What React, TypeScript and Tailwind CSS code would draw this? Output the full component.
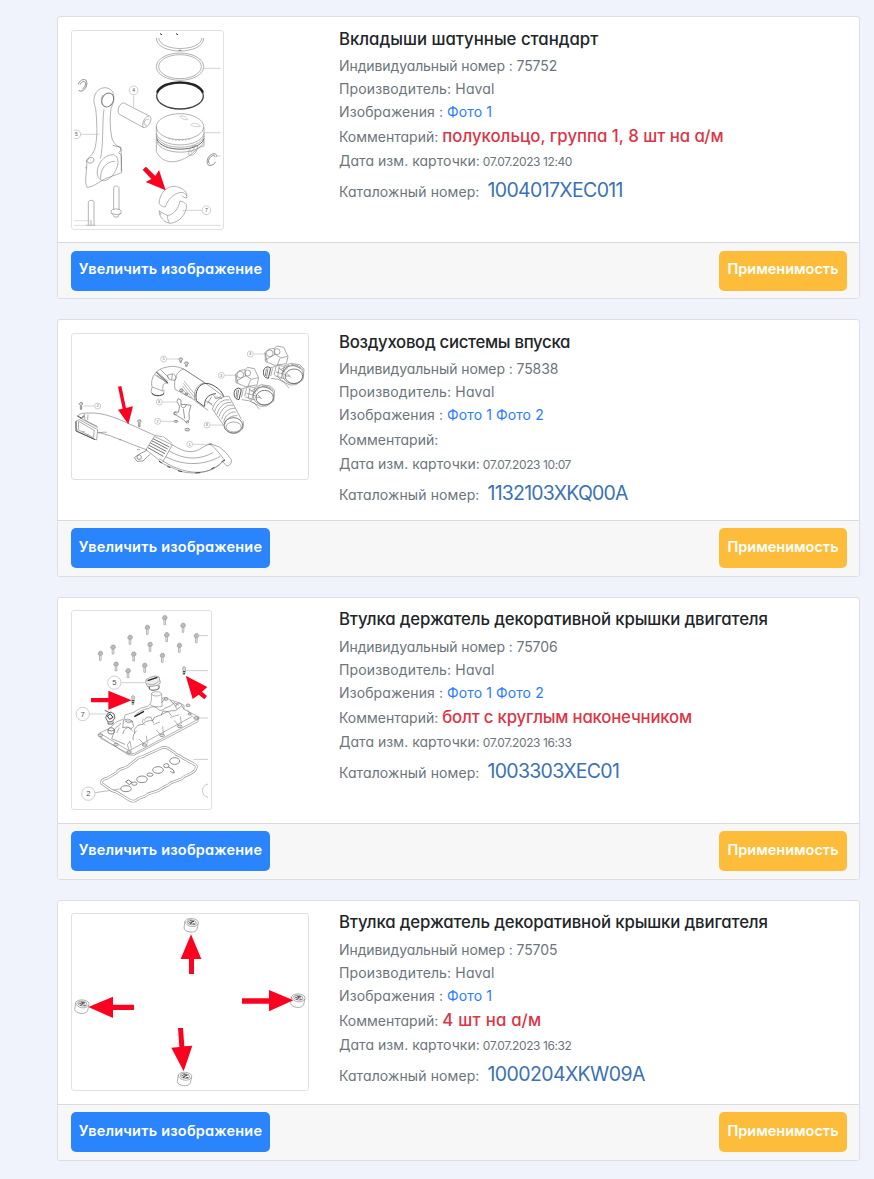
import type { ReactNode } from 'react';

const RED = '#fb0320';

function Callout({ x, y, n, r = 13 }: { x: number; y: number; n: string; r?: number }) {
  return (
    <g>
      <circle cx={x} cy={y} r={r} fill="#fff" stroke="#b5b5b5" strokeWidth={2} />
      <text x={x} y={y + r * 0.42} textAnchor="middle" fontSize={r * 1.15} fill="#555" stroke="none" fontFamily="Liberation Sans, sans-serif">
        {n}
      </text>
    </g>
  );
}

function PistonDrawing() {
  return (
    <svg viewBox="36 33 453 594" className="block h-[198px] w-[151px]" fill="none" stroke="#8d8d8d" strokeWidth={2}>
      <path d="M289 54c0 52 142 52 142 0M296 54c4 42 126 42 130 0" />
      <path d="M300 41l6 3M348 41l6 3" stroke="#333" strokeWidth={3} />
      <path d="M356 91h8" strokeWidth={4} />
      <ellipse cx={360} cy={140} rx={71} ry={41} />
      <ellipse cx={360} cy={140} rx={64} ry={36} />
      <path d="M416 120l8-3M432 145h50M432 338h50M472 408h10" stroke="#bbb" />
      <ellipse cx={360} cy={228} rx={70} ry={39} stroke="#444" strokeWidth={4} />
      <path d="M291 218c14-42 124-42 138 0" stroke="#222" strokeWidth={6} />
      <path d="M55 193c3-12 15-17 22-13 8 7 2 28-11 33-5 1-9 0-10-3M60 194c3-8 11-12 15-8 4 6-1 18-8 21" stroke="#777" strokeWidth={2.5} />
      <path d="M470 410c2-10-10-11-18-5-12 8-14 28-5 31 8 2 17-4 20-11M465 411c0-6-7-6-12-1-8 6-10 19-4 20" stroke="#777" strokeWidth={2.5} />
      <Callout x={221} y={211} n="4" />
      <path d="M221 225v36" stroke="#bbb" />
      <path d="M192 249c-12-3-24 24-14 34l71 39M192 249l74 38M249 322c13 5 30-22 22-32-10-9-27 15-22 32M266 298c-14-2-19 18-6 18" />
      <path d="M107 266c-14-34 2-62 27-63 31 2 34 31 19 62-4 31-3 59 2 86 4 17 12 26 28 32l2 75-49 18c-21 11-37 26-55 26-10-17 2-54-1-82 14-15 24-24 26-40 7-31 5-76 1-114z" />
      <ellipse cx={143} cy={240} rx={17} ry={22} stroke="#777" strokeWidth={3} transform="rotate(25 143 240)" />
      <path d="M129 225c-10 12-4 33 8 34M132 268c-6 41-1 110-11 148" />
      <path d="M112 464c-4-29 20-61 48-60 24 7 13 46-4 64-14 16-37 23-44-4M122 478c-3-28 16-54 42-54" />
      <path d="M158 376l23 6 2 9-7 7 8 8v48M80 424c5-13 22-16 22-4-3 12-17 11-22 4M79 440l-2 5" stroke="#777" />
      <Callout x={49} y={343} n="5" />
      <path d="M36 320v46" stroke="#fff" strokeWidth={12} />
      <path d="M63 343h55" stroke="#bbb" />
      <path d="M161 570v-66c0-8 16-8 16 0v66M154 572c5-7 25-7 29 0v8l-8 6-1 5h-11l-2-5-8-7zM156 580c8 5 17 5 26 0" />
      <path d="M85 616v-69c0-8 17-8 17 0v69M93 602v14M78 616h28" />
      <path d="M42 602h52M42 616h440" stroke="#ccc" />
      <ellipse cx={360} cy={320} rx={71} ry={39} />
      <path d="M289 320v74c17 38 57 38 91 18 20-10 29-30 52-34v-56M289 341c14 45 130 45 143 0M289 348c14 45 130 45 143 0" />
      <path d="M290 356c13 42 128 42 142 0" stroke="#666" strokeWidth={3} />
      <path d="M291 365c13 42 128 42 140 0" stroke="#888" />
      <path d="M326 356c20 7 46 7 68 0" strokeDasharray="4 6" />
      <path d="M359 288c4 8 13 12 24 11-2-7-10-12-24-11M392 314c7-6 21-6 30 5-13 2-24 1-30-5" stroke="#bbb" />
      <path d="M387 397c-3-11 11-22 26-20-1 15-9 29-20 29-9-1-10-4-6-9M392 394c0 4 5 4 12-14" />
      <path d="M297 549c3-31 22-50 46-50 18 2 31 11 37 21v14c-5 0-11-3-15-8M297 549c4 8 11 12 19 12 7-22 24-42 49-44 7 1 12 5 15 10" />
      <path d="M297 572c2 20 15 36 34 38 29-3 49-29 49-56-6-6-12-10-20-11-4 22-19 42-37 43-9-3-18-8-26-14zM323 586c-1 9 1 17 6 23M304 577l-5 8" />
      <Callout x={439} y={571} n="7" />
      <path d="M366 571h59" stroke="#bbb" />
      <path d="M258 440l28 28 11-18 20 61-60-25 17-9-26-28z" fill={RED} stroke="none" />
    </svg>
  );
}

function ThrottleBody() {
  return (
    <g>
      <path d="M527 147l10-10 18-3 7-7 21 4 13 27-5 22-35 5-28-12zM527 147l7 28M555 134l2 20M594 158l-19 5-18-11-29 17M564 184l8-20" />
      <circle cx={541} cy={149} r={10} />
      <circle cx={563} cy={144} r={9} />
      <path d="M528 192c-8 6-7 23 0 29l9 3 7-30-8-5z" stroke="#555" strokeWidth={3} />
      <path d="M531 195l-3 22M536 194l-4 25" stroke="#555" />
      <path d="M542 193l27-8 14 3 21-9 27 4 13 13-3 32-21 15-18 1-36-17-21-3M550 194l-6 23M560 190l-6 24M570 188l-5 31 11 11M573 198l26-13M577 207l18-14M566 192l22 14M560 205l28 8M556 216l30 9M585 188l-10 38M606 182l28 12" />
      <ellipse cx={611} cy={213} rx={31} ry={27} />
      <ellipse cx={614} cy={218} rx={26} ry={22} stroke="#666" strokeWidth={2.5} />
      <path d="M583 205c5-23 44-30 58-6M579 230l20 23M593 209l12 13M586 217h16" />
    </g>
  );
}

function IntakeDrawing() {
  return (
    <svg viewBox="36 27 708 435" className="block h-[145px] w-[236px]" fill="none" stroke="#808080" strokeWidth={2}>
      <ThrottleBody />
      <g transform="translate(88 -64)"><ThrottleBody /></g>
      <path d="M276 186c-6-28 11-55 46-60 19-5 33 0 49 6M321 174c-11 0-15 8-12 23M276 186l33 12M284 149l41 27M290 140l34 29M290 150l34 25M301 133l27 27M276 187l-3 13 4 8c10 6 27 6 34-1l1-11" />
      <path d="M276 205c9 9 26 9 36 1" stroke="#444" strokeWidth={3} />
      <path d="M289 142l35 32" stroke="#555" strokeWidth={3} />
      <path d="M323 150l17-4 10 11-5 9-17-2-5-7zM337 147l-2 18M371 132c-20 6-31 28-26 61l60 32c-6-25 4-46 29-52zM371 132l63 41 54 39" />
      <path d="M372 168l36 44M370 175l33 42M367 182l30 38M364 189l26 30M360 192l15 18" stroke="#999" />
      <ellipse cx={364} cy={196} rx={5} ry={4} stroke="#555" /><ellipse cx={379} cy={207} rx={4} ry={3} stroke="#555" />
      <path d="M409 227c-5-28 7-50 29-52 24 0 55 29 52 41M409 227l24 18" stroke="#555" strokeWidth={3} />
      <path d="M434 244c-2-22 10-36 34-38" stroke="#555" strokeWidth={3} />
      <path d="M403 226l42 31M466 215l20 6M438 228l18 9M455 215l-13 21M460 210l8 12 16-8M444 230l14 12" />
      <path d="M457 252c8-25 27-40 50-38M464 260c7-25 25-39 44-35M471 268c7-25 25-39 43-35M477 275c7-25 25-38 42-34M485 283c6-24 22-34 40-33M491 292c3-20 18-32 36-31M494 299c4-18 20-28 38-27M457 252l36 52M507 214l37 69" />
      <ellipse cx={520} cy={301} rx={28} ry={23} stroke="#666" strokeWidth={2.5} />
      <ellipse cx={521} cy={306} rx={23} ry={15} />
      <path d="M494 307c8 23 43 26 54 1M549 287l2 15-4 10" />
      <g fill="#ddd">
        <path d="M356 103l3-4h7l2 5-4 3v5h-4v-5zM373 115l3-4h7l2 5-4 3v5h-4v-5zM57 236l3-3h7l1 5-3 3v12h-4v-12zM232 288l3-3h7l1 5-3 3v12h-4v-12z" stroke="#666" />
        <ellipse cx={348} cy={289} rx={6} ry={3} stroke="#666" />
        <ellipse cx={382} cy={314} rx={7} ry={4} stroke="#666" />
      </g>
      <path d="M354 221l9 4v13l17 1 13 2-6 22 1 20-8 10-11-10-27-17 2-6 11 2 4-18-8-15zM363 238c0 12 12 15 17 0M370 251l4 30" stroke="#666" />
      <circle cx={345} cy={266} r={4} /><circle cx={382} cy={291} r={4} />
      <path d="M52 273l13-8 21-1c50-2 92 19 140 41l58 26 23 4M112 321c53 13 97 36 149 54M48 288l10-4 55 30-3 31-57-26-5-11zM56 289l47 27-3 22-45-24zM60 279l54 29M73 266l2 20 37 18M84 268l-1 18M53 273c7 7 16 9 20 1M113 324l22-3M67 321l7-2M85 328l-3 4M135 323l5-2M177 344h7M231 374h9" />
      <path d="M48 289v29l57 26M52 273l12 6 8-7" stroke="#555" strokeWidth={3} />
      <path d="M283 334l45 22 9 3-29 53M283 334l-25 40 35 28M310 335l25 19" />
      <path d="M279 341l49 25M275 347l48 25M271 354l48 25M267 361l48 25M264 368l46 26" stroke="#777" strokeWidth={3} />
      <path d="M337 359c36 25 65 28 93 7l18-9M453 357l25 9 19 16 17 22c2 10-5 20-15 18l-11-12c-37 43-112 45-190-9M327 377c46 29 93 28 133 5M317 395c59 31 120 24 164-1M453 359c15 12 28 30 41 47M295 402l5 10 61 27c47 12 98 2 127-30" />
      <path d="M297 409l8 4M322 424l9 4M354 437l12 3M406 444l15-1M454 432l9-5M485 410l10-5M446 358l8-1" stroke="#444" strokeWidth={3} />
      <path d="M260 376l-25 13-12 9 8 11 18-1 22-21M231 393l8-4 6 7-4 7-9-1z" stroke="#666" />
      <Callout x={311} y={102} n="5" r={9} /><path d="M321 102h35" stroke="#bbb" />
      <Callout x={484} y={151} n="3" r={9} /><path d="M494 151h33" stroke="#bbb" />
      <Callout x={571} y={87} n="4" r={9} /><path d="M581 87h35" stroke="#bbb" />
      <Callout x={298} y={231} n="6" r={9} /><path d="M308 231h43" stroke="#bbb" />
      <Callout x={293} y={289} n="7" r={9} /><path d="M303 289h40" stroke="#bbb" />
      <Callout x={441} y={300} n="8" r={9} /><path d="M451 300h41" stroke="#bbb" />
      <Callout x={113} y={243} n="2" r={9} /><path d="M70 243h33" stroke="#bbb" />
      <Callout x={389} y={358} n="1" r={9} /><path d="M399 358h47" stroke="#bbb" />
      <path d="M174 185l10-2 14 66 21-5-14 54-31-44 14-3z" fill={RED} stroke="none" />
    </svg>
  );
}

const BOLTS: [number, number][] = [
  [314, 55], [369, 78], [262, 84], [320, 106], [409, 109], [210, 114], [270, 135], [358, 138],
  [159, 143], [121, 162], [221, 164], [307, 168], [168, 194], [254, 198], [204, 214],
];

const GASKET =
  'M126 551c-4-8 3-14 15-16l30-18c5-12 18-9 31-17l25-20c8-12 21-6 30-15l43-19c12-7 23-4 33 5l11 7c7 11 16 6 24 16l32 17c14 6 9 14 4 21-12 15-30 11-38 24l-34 13c-12 12-22 9-35 22l-33 11c-10 12-23 7-34 18-9 7-18 3-25-2l-31-19c-8-7-17-3-25-12z';

function CoverDrawing() {
  return (
    <svg viewBox="36 33 417 594" className="block h-[198px] w-[139px]" fill="none" stroke="#8d8d8d" strokeWidth={2}>
      {BOLTS.map(([x, y]) => (
        <g key={`${x}-${y}`} stroke="#999">
          <path d={`M${x - 2.5} ${y + 2}v17h5v-17`} fill="#eee" />
          <path d={`M${x - 6} ${y - 3}l3-5h7l3 5v4l-4 3h-6l-4-3z`} fill="#bbb" />
        </g>
      ))}
      <path d="M415 107h29M378 212h66M414 354h30M400 478h44" stroke="#ccc" strokeWidth={3} />
      <Callout x={163} y={248} n="5" r={20} /><path d="M184 248h70" stroke="#bbb" />
      <Callout x={68} y={342} n="7" r={20} /><path d="M89 342h48" stroke="#bbb" />
      <Callout x={85} y={581} n="2" r={20} /><path d="M106 578l78-12" stroke="#999" />
      <path d="M444 552c-22 4-22 36 0 40" stroke="#aaa" />
      <path d="M258 240c14-12 32-14 39-9l4 17-7 8-30 5-7-13z" fill="#eee" stroke="#777" />
      <path d="M263 242l29-10" stroke="#222" strokeWidth={4} />
      <path d="M263 251c12 8 27 0 34-9" stroke="#888" />
      <path d="M268 260v7c8 6 22 4 29-2v-9" stroke="#555" strokeWidth={3} />
      <path d="M134 331l17 8M137 353l5-12 11-5 9 6 3 12-9 11-12 1zM144 367v5h14l2-7" stroke="#444" strokeWidth={2.5} />
      <path d="M142 348l9-6 8 10-10 6z" stroke="#333" strokeWidth={3} />
      <path d="M144 390c0-9 19-9 19 0v8c-5 5-15 5-19 0zM144 389c6 5 15 5 19 0" stroke="#444" />
      <path d="M274 282c0-9 31-9 31 0l1 36M274 282c5 8 26 8 31 0M274 283c2 18-1 30-9 34M269 313c8 7 26 10 39 5" />
      <path d="M115 401l32-15 22-20 24-10 2-11 26-8 20-12 24-7M306 297c8-8 15-5 22 2l29 9 15 8v12l45 23-3 14-192 101-18-2-84-54-6-8M119 413l88 49 17-2 192-103M120 400l71 43 17 9 191-104" />
      <path d="M181 369c-2 14-17 6-19 29l-7 18 40 17M191 360l13-3 12 5 5 17-6 7-13-5-14 2zM197 361l6 8 16-5M224 401c-5-15 8-28 25-28 8-13 22-10 30-12l3-8 19-8c20-10 30-14 45-13l19-14M220 421c-3-11 2-21 10-29M225 347c11-11 24-20 40-21 8-7 18-8 27-1 5 8 15 8 22 0l17-7 12-10 14 8M189 402c0-8 5-17 16-20l13 11M254 362c0-9 10-13 19-10l8 17M303 347l6-14 16 2 9 12M349 320c-4-10 10-16 15-6l8 14M314 295l-9 14M330 301l11 9 9 16" stroke="#777" />
      <path d="M215 366c-6-5-17-5-21 1M255 376l-8-10 3-10M178 383l-8 16M280 374l20-8M331 352l27-8" />
      <path d="M223 350l29-16" stroke="#222" strokeWidth={4} />
      <path d="M208 451l-6-16 8-12 4 23M254 434l-17-17M262 430l-3-23M303 406l-15-17M310 402l-2-23M357 379l-14-18M364 372l-3-23M394 347l-12-18" />
      <g stroke="#777" fill="#ddd">
        <ellipse cx={121} cy={406} rx={7} ry={4} /><ellipse cx={168} cy={434} rx={7} ry={4} />
        <ellipse cx={207} cy={456} rx={7} ry={4} /><ellipse cx={254} cy={435} rx={7} ry={4} />
        <ellipse cx={306} cy={406} rx={7} ry={4} /><ellipse cx={359} cy={379} rx={7} ry={4} />
        <ellipse cx={408} cy={354} rx={7} ry={4} /><ellipse cx={318} cy={297} rx={6} ry={4} />
        <ellipse cx={384} cy={316} rx={6} ry={4} /><ellipse cx={389} cy={342} rx={5} ry={3} />
      </g>
      <path d={GASKET} stroke="#999" strokeWidth={8} />
      <path d={GASKET} stroke="#fff" strokeWidth={4} />
      <g stroke="#777" strokeWidth={2.5}>
        <ellipse cx={198} cy={566} rx={16} ry={9} /><ellipse cx={246} cy={538} rx={16} ry={10} />
        <ellipse cx={294} cy={510} rx={16} ry={10} /><ellipse cx={344} cy={483} rx={15} ry={10} />
        <ellipse cx={223} cy={551} rx={8} ry={5} /><ellipse cx={270} cy={524} rx={9} ry={5} /><ellipse cx={319} cy={497} rx={8} ry={6} />
        <path d="M197 545l8-5 11 7-8 7zM325 501l14 8 4 9-6 1-6-6" stroke="#666" />
      </g>
      <path d="M215 290c1-4 7-4 8 0v9l-2 15h-5v-15zM368 203c1-4 7-4 8 0v9l-2 11h-5v-11z" stroke="#888" fill="#ddd" />
      <path d="M215 302h8M216 308h6M369 215h7M370 221h5" stroke="#333" strokeWidth={3} />
      <path d="M93 294h52v-22l70 29-70 28v-22H93zM377 227l65 34-16 14 15 13-8 10-17-14-18 13z" fill={RED} stroke="none" />
    </svg>
  );
}

function Bushing({ x, y }: { x: number; y: number }) {
  return (
    <g transform={`translate(${x} ${y})`}>
      <path d="M-18-13c6-14 42-9 40 5l-4 19c-5 13-37 10-39-4zM-18-12C-16 3 14 9 21-6" />
      <ellipse cx={2} cy={-10} rx={14} ry={7} stroke="#777" transform="rotate(8 2 -10)" />
      <path d="M-8-12l7 3 10-4M3-8l-7 3M5-6l7 1M-3-15l12 3" stroke="#333" strokeWidth={2.5} />
    </g>
  );
}

function BushingsDrawing() {
  return (
    <svg viewBox="36 42 708 528" className="block h-[176px] w-[236px]" fill="none" stroke="#888" strokeWidth={2}>
      <Bushing x={393} y={77} />
      <Bushing x={65} y={321} />
      <Bushing x={713} y={303} />
      <Bushing x={373} y={538} />
      <g fill={RED} stroke="none">
        <path d="M393 103l31 74h-22v45h-15v-45h-25z" />
        <path d="M85 321l74-31v24h63v16h-63v24z" />
        <path d="M700 301l-73 33v-23h-81v-16h81v-25z" />
        <path d="M354 384h15l4 55 24-2-26 77-37-71 24-2z" />
      </g>
    </svg>
  );
}

type Part = {
  title: string;
  titleClass: string;
  id: string;
  photos: string;
  comment?: string;
  commentClass?: string;
  date: string;
  catalog: string;
  catalogClass: string;
  bodyClass: string;
  imageClass: string;
  footerClass: string;
  drawing: ReactNode;
};

const PARTS: Part[] = [
  {
    title: 'Вкладыши шатунные стандарт', titleClass: 'mb-0.5 leading-[26px] tracking-[0px]', id: '75752', photos: 'Фото 1',
    comment: 'полукольцо, группа 1, 8 шт на а/м', commentClass: 'tracking-[0px]', date: '07.07.2023 12:40',
    catalog: '1004017XEC011', catalogClass: 'tracking-[-0.65px]', bodyClass: 'h-[225px]', imageClass: 'pt-[13px]',
    footerClass: 'pt-2 *:pb-1', drawing: <PistonDrawing />,
  },
  {
    title: 'Воздуховод системы впуска', titleClass: 'mb-0.5 leading-[26px] tracking-[-0.3px]', id: '75838', photos: 'Фото 1 Фото 2',
    date: '07.07.2023 10:07', catalog: '1132103XKQ00A', catalogClass: 'tracking-[-0.78px]', bodyClass: 'h-[200px]', imageClass: 'pt-[13px]',
    footerClass: 'pt-[7px] *:pb-0.5', drawing: <IntakeDrawing />,
  },
  {
    title: 'Втулка держатель декоративной крышки двигателя', titleClass: 'mb-1 leading-[24px] tracking-[-0.14px]', id: '75706', photos: 'Фото 1 Фото 2',
    comment: 'болт с круглым наконечником', commentClass: 'tracking-[-0.19px]', date: '07.07.2023 16:33',
    catalog: '1003303XEC01', catalogClass: 'tracking-[-0.7px]', bodyClass: 'h-[225px]', imageClass: 'pt-[12px]',
    footerClass: 'pt-[7px] *:pb-0.5', drawing: <CoverDrawing />,
  },
  {
    title: 'Втулка держатель декоративной крышки двигателя', titleClass: 'mb-1 leading-[24px] tracking-[-0.14px]', id: '75705', photos: 'Фото 1',
    comment: '4 шт на а/м', commentClass: 'tracking-[0.28px]', date: '07.07.2023 16:32',
    catalog: '1000204XKW09A', catalogClass: 'tracking-[-0.6px]', bodyClass: 'h-[203px]', imageClass: 'pt-[12px]',
    footerClass: 'pt-[7px] *:pb-0.5', drawing: <BushingsDrawing />,
  },
];

function PartCard({ part }: { part: Part }) {
  return (
    <article className="w-[803px] overflow-hidden rounded-[3px] border border-[#dedfe1] bg-white">
      <div className={`flex items-start ${part.bodyClass}`}>
        <div className={`w-[281px] shrink-0 pl-[13px] ${part.imageClass}`}>
          <div className="w-fit overflow-hidden rounded-[3px] border border-[#dee2e6] bg-white">{part.drawing}</div>
        </div>
        <div className="pt-[9px] text-[14px] whitespace-nowrap text-[#6c757d]">
          <h2 className={`text-[16.75px] text-[#212529] [font-weight:450] ${part.titleClass}`}>{part.title}</h2>
          <p className="h-[23px] leading-[23px] tracking-[-0.1px]">Индивидуальный номер : {part.id}</p>
          <p className="h-[23px] leading-[23px] tracking-[0.14px]">Производитель: Haval</p>
          <p className="flex h-[23px] gap-1 leading-[23px] tracking-[0.1px]">
            <span>Изображения :</span>
            <a className="text-[#2a7bff]">{part.photos}</a>
          </p>
          <p className="flex h-[27px] items-baseline gap-1 leading-[27px]">
            <span>Комментарий:</span>
            {part.comment && <span className={`text-[16.75px] text-[#dc3545] [font-weight:450] ${part.commentClass}`}>{part.comment}</span>}
          </p>
          <p className="flex h-[22px] items-baseline gap-[3px] leading-[21px]">
            <span className="tracking-[0.04px]">Дата изм. карточки:</span>
            <span className="text-[12px] tracking-[-0.42px]">{part.date}</span>
          </p>
          <p className="flex h-9 items-baseline gap-2 leading-[36px]">
            <span className="tracking-[0.1px]">Каталожный номер:</span>
            <span className={`text-[19.5px] text-[#3a72b4] ${part.catalogClass}`}>{part.catalog}</span>
          </p>
        </div>
      </div>
      <footer className={`flex h-14 items-start justify-between border-t border-[#d9dadb] bg-[#f7f7f7] pr-3 pl-[13px] ${part.footerClass}`}>
        <button className="h-10 w-[199px] rounded-[5px] bg-[#2a85fd] text-[14.5px] font-semibold tracking-[0.2px] whitespace-nowrap text-white">
          Увеличить изображение
        </button>
        <button className="h-10 w-32 rounded-[5px] bg-[#fdbd3a] text-[14.5px] font-semibold whitespace-nowrap text-white">
          Применимость
        </button>
      </footer>
    </article>
  );
}

export default function App() {
  return (
    <main className="flex h-[1179px] flex-col gap-5 overflow-hidden bg-[#f0f3fc] pt-4 pl-[57px] font-['Inter','Liberation_Sans',sans-serif] [font-feature-settings:'cv11']">
      {PARTS.map((part) => (
        <PartCard key={part.id} part={part} />
      ))}
    </main>
  );
}
